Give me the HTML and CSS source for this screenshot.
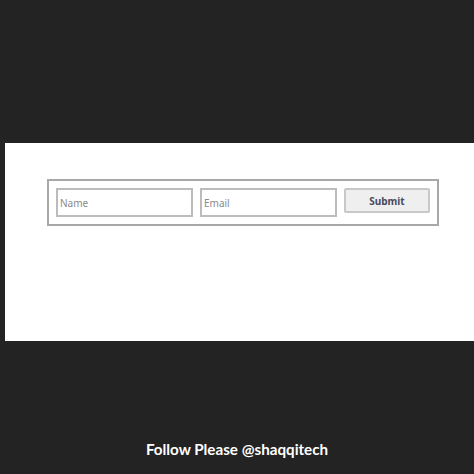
FILE: index.html
```html
<!DOCTYPE html>
<html>
<head>
<meta charset="utf-8">
<link rel="stylesheet" href="styles.css">
</head>
<body>
<div class="page">
  <section class="panel">
    <form class="form">
      <input class="field" type="text" placeholder="Name">
      <input class="field" type="email" placeholder="Email">
      <button class="submit" type="button">Submit</button>
    </form>
  </section>
  <footer class="credit">Follow Please @shaqqitech</footer>
</div>
</body>
</html>
```
FILE: styles.css
```css
html, body {
  margin: 0;
  padding: 0;
  background: #232323;
}
.page {
  width: 474px;
  height: 474px;
  padding-top: 143px;
  box-sizing: border-box;
  display: flex;
  flex-direction: column;
}
.panel {
  margin-left: 5px;
  height: 198px;
  background: #ffffff;
  padding-top: 36px;
  padding-left: 42px;
  box-sizing: border-box;
}
.form {
  width: 392px;
  height: 47px;
  box-sizing: border-box;
  border: 2px solid #a8a8a8;
  padding: 7px 6px 7px 7px;
  display: flex;
  align-items: flex-start;
  gap: 7px;
  margin: 0;
}
.field {
  width: 137px;
  height: 29px;
  box-sizing: border-box;
  border: 2px solid #bcbcbc;
  margin: 0;
  padding: 0 2px;
  font-family: "Noto Sans", "Open Sans", sans-serif;
  font-size: 10px;
  color: #666;
  background: #fff;
  outline: none;
}
.field::placeholder {
  color: #8a8a8a;
}
.submit {
  width: 86px;
  height: 25px;
  box-sizing: border-box;
  margin: 0;
  padding: 0;
  border: 2px solid #c8c8c8;
  border-radius: 2px;
  background: #efefef;
  font-family: "Noto Sans", "Open Sans", sans-serif;
  font-weight: 700;
  font-size: 10px;
  color: #4a4a5a;
}
.credit {
  margin-top: 99px;
  text-align: center;
  font-family: "Lato", "Noto Sans", sans-serif;
  font-weight: 700;
  font-size: 15.2px;
  line-height: 19px;
  color: #ffffff;
}
```
